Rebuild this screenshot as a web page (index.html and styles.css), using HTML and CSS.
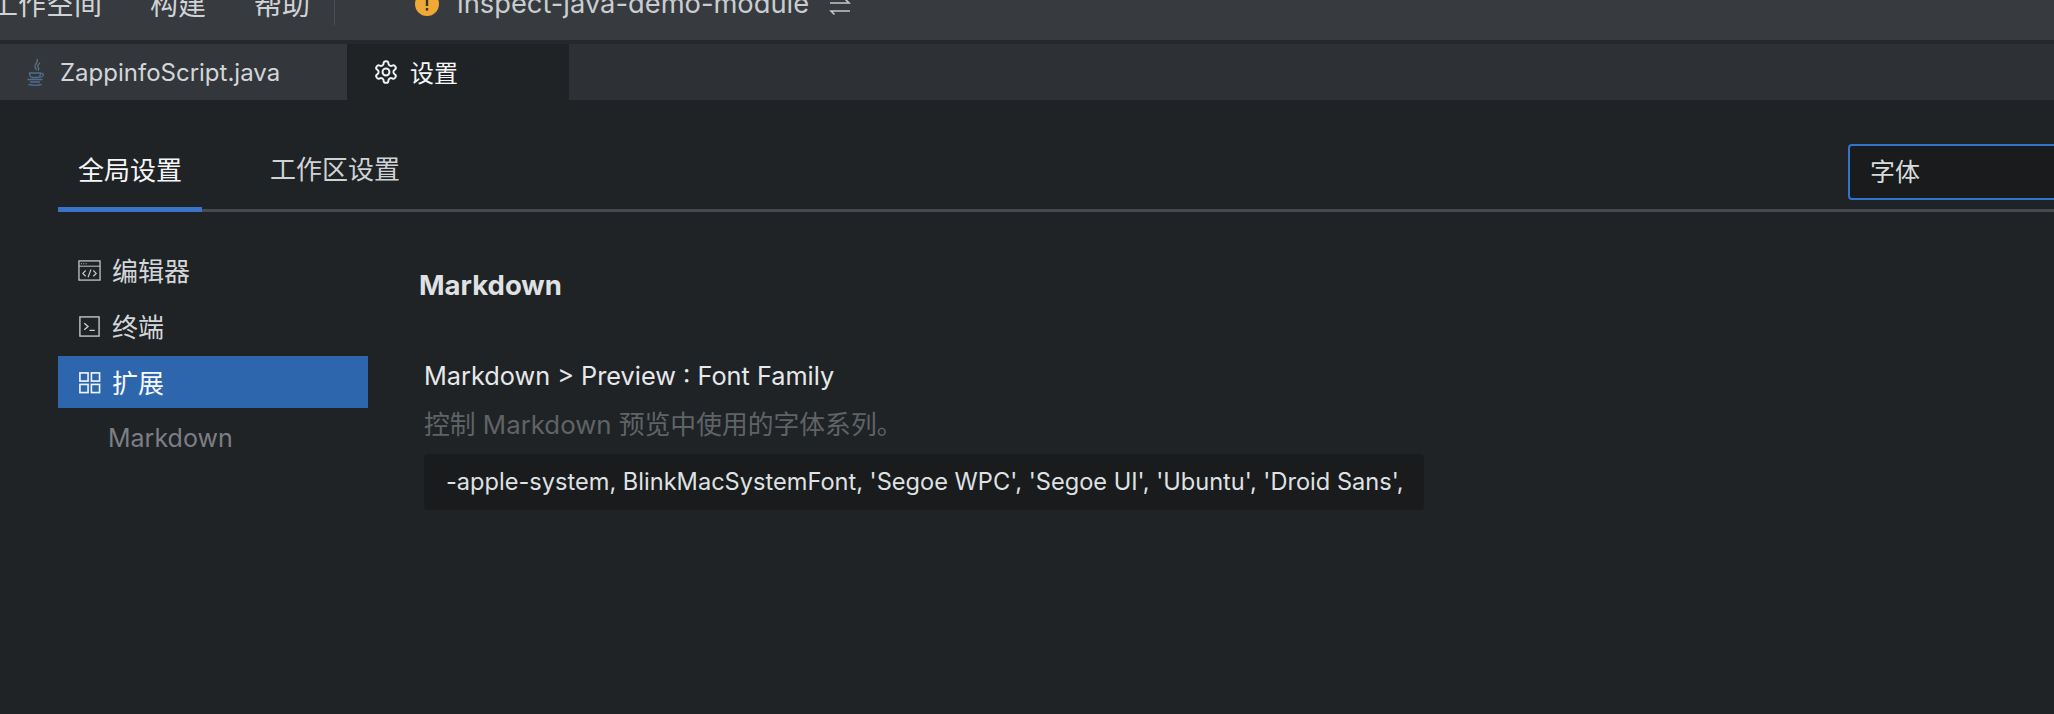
FILE: index.html
```html
<!DOCTYPE html>
<html>
<head>
    <meta charset="utf-8">
    <title>设置</title>
    <link rel="stylesheet" href="styles.css">
</head>
<body>
    <div class="menubar">
        <div class="menu-items">
            <span class="menu-item menu-first">工作空间</span>
            <span class="menu-item">构建</span>
            <span class="menu-item">帮助</span>
        </div>
        <div class="menu-sep"></div>
        <div class="project">
            <svg class="warn-icon" viewBox="0 0 24 24"><circle cx="12" cy="12" r="12" fill="#efa935"/><rect x="10.8" y="4" width="2.4" height="10" fill="#3a3228"/><rect x="10.8" y="16" width="2.4" height="2.6" fill="#3a3228"/></svg>
            <span class="project-name">inspect-java-demo-module</span>
            <svg class="switch-icon" viewBox="0 0 22 16" fill="none" stroke="#c3c8cc" stroke-width="1.6"><path d="M1 3h19l-3.500-3.500"/><path d="M21 11H2l3.500 3.500"/></svg>
        </div>
    </div>

    <div class="tabbar">
        <div class="tab">
            <svg class="java-icon" viewBox="0 0 20 28" fill="none" stroke="#4f6d8c" stroke-width="1.300">
                <path d="M11 1c2 3-3 5-2 8 .4 1.300 1.500 2 1.500 3" stroke="#5d7186"/>
                <path d="M14 5c-3 2-2.500 3.500-1.500 5 .5 1 0 2-.5 2.500" stroke="#5d7186"/>
                <path d="M3.500 15h11c0 2.500-1 4-2.500 4.500H6c-1.500-.5-2.500-2-2.500-4.500z"/>
                <path d="M15 15.500c2.500-.5 3.500 1.500 1 3l-2.500 .8"/>
                <path d="M1.500 21.500h15M4 24h10M2.500 26.500c4 1 9 1 13 0"/>
            </svg>
            <span>ZappinfoScript.java</span>
        </div>
        <div class="tab tab-active">
            <svg class="gear-icon" viewBox="0 0 24 24" fill="none" stroke="#f0f2f3" stroke-width="1.800" stroke-linejoin="round">
                <path d="M12.220 2h-.44a2 2 0 0 0-2 2v.18a2 2 0 0 1-1 1.730l-.43.25a2 2 0 0 1-2 0l-.15-.08a2 2 0 0 0-2.730.73l-.22.38a2 2 0 0 0 .73 2.730l.15.1a2 2 0 0 1 1 1.720v.51a2 2 0 0 1-1 1.740l-.15.09a2 2 0 0 0-.73 2.730l.22.38a2 2 0 0 0 2.730.73l.15-.08a2 2 0 0 1 2 0l.43.25a2 2 0 0 1 1 1.730V20a2 2 0 0 0 2 2h.44a2 2 0 0 0 2-2v-.18a2 2 0 0 1 1-1.730l.43-.25a2 2 0 0 1 2 0l.15.08a2 2 0 0 0 2.730-.73l.22-.39a2 2 0 0 0-.73-2.730l-.15-.08a2 2 0 0 1-1-1.740v-.5a2 2 0 0 1 1-1.740l.15-.09a2 2 0 0 0 .73-2.730l-.22-.38a2 2 0 0 0-2.730-.73l-.15.08a2 2 0 0 1-2 0l-.43-.25a2 2 0 0 1-1-1.730V4a2 2 0 0 0-2-2z"/>
                <circle cx="12" cy="12" r="3.200"/>
            </svg>
            <span>设置</span>
        </div>
    </div>

    <div class="settings-head">
        <div class="scope scope-active">全局设置</div>
        <div class="scope">工作区设置</div>
        <div class="search">字体</div>
    </div>

    <div class="settings-body">
        <div class="sidebar">
            <div class="side-item">
                <svg class="side-icon" viewBox="0 0 24 24" fill="none" stroke="#c9cccf" stroke-width="1.300">
                    <rect x="1" y="2" width="22" height="20"/>
                    <path d="M1 7.500h22" stroke-width="1"/>
                    <path d="M3 5h1M5.500 5h1M8 5h1" stroke-width="1.200"/>
                    <path d="M8 12l-3 3 3 3M16 12l3 3-3 3M13.500 11l-3 8" stroke-width="1.200"/>
                </svg>
                <span>编辑器</span>
            </div>
            <div class="side-item">
                <svg class="side-icon" viewBox="0 0 24 24" fill="none" stroke="#c9cccf" stroke-width="1.400">
                    <rect x="2" y="2" width="20" height="20"/>
                    <path d="M6.500 8.500l4 3.500-4 3.500M12 16h5.500"/>
                </svg>
                <span>终端</span>
            </div>
            <div class="side-item side-active">
                <svg class="side-icon" viewBox="0 0 24 24" fill="none" stroke="#f2f5f8" stroke-width="1.700">
                    <rect x="2" y="2" width="8.500" height="8.500"/>
                    <rect x="14" y="2" width="8.500" height="8.500"/>
                    <rect x="2" y="14" width="8.500" height="8.500"/>
                    <rect x="14" y="14" width="8.500" height="8.500"/>
                </svg>
                <span>扩展</span>
            </div>
            <div class="side-sub">Markdown</div>
        </div>

        <div class="content">
            <h2 class="section-title">Markdown</h2>
            <div class="setting">
                <div class="setting-title">Markdown &gt; Preview : Font Family</div>
                <div class="setting-desc">控制 Markdown 预览中使用的字体系列。</div>
                <div class="setting-input"><span class="input-text">-apple-system, BlinkMacSystemFont, 'Segoe WPC', 'Segoe UI', 'Ubuntu', 'Droid Sans', sans-serif</span></div>
            </div>
        </div>
    </div>
</body>
</html>
```

FILE: styles.css
```css
html, body {
    margin: 0;
    height: 100%;
    overflow: hidden;
}

body {
    background: #202326;
    color: #e4e6e8;
    font-family: 'Inter', 'Noto Sans CJK SC', sans-serif;
    font-size: 26px;
}

/* top menu, cut off by the top of the window */
.menubar {
    height: 40px;
    background: #373b40;
    border-bottom: 4px solid #26292c;
    display: flex;
    align-items: flex-start;
    overflow: hidden;
}

.menu-items {
    display: flex;
    gap: 48px;
    margin-top: -14px;
    font-size: 28px;
    line-height: 38px;
    color: #d0d3d6;
}

.menu-first {
    margin-left: -10px;
}

.menu-sep {
    width: 1px;
    height: 25px;
    margin-left: 24px;
    background: #4a4e53;
}

.project {
    display: flex;
    align-items: center;
    margin-left: 80px;
    margin-top: -15px;
    color: #c9cdd0;
    font-size: 27.300px;
    line-height: 38px;
}

.warn-icon {
    width: 24px;
    height: 24px;
}

.project-name {
    margin-left: 18px;
}

.switch-icon {
    width: 22px;
    height: 16px;
    margin-left: 20px;
    margin-top: 8px;
}

/* editor tabs */
.tabbar {
    height: 56px;
    background: #2d3135;
    display: flex;
}

.tab {
    width: 347px;
    background: #33373c;
    display: flex;
    align-items: center;
    color: #d3d6d9;
    font-size: 24px;
    box-sizing: border-box;
    padding-left: 26px;
}

.tab span {
    margin-left: 14px;
}

.tab-active {
    width: 222px;
    background: #202326;
    color: #f5f6f7;
}

.tab-active span {
    margin-left: 11px;
    margin-top: -2px;
}

.java-icon {
    width: 20px;
    height: 28px;
}

.gear-icon {
    width: 26px;
    height: 26px;
}

/* global / workspace row */
.settings-head {
    display: flex;
    align-items: flex-end;
    height: 109px;
    margin-left: 58px;
    border-bottom: 3px solid #46494d;
}

.scope {
    height: 105px;
    box-sizing: border-box;
    padding-top: 43px;
    line-height: 46px;
    margin-right: 68px;
    color: #cfd2d5;
}

.scope-active {
    width: 144px;
    padding-top: 41px;
    text-align: center;
    color: #f5f6f7;
    border-bottom: 5px solid #3a74c9;
    margin-bottom: -3px;
}

.search {
    width: 400px;
    height: 56px;
    box-sizing: border-box;
    margin-left: auto;
    margin-right: -194px;
    margin-bottom: 9px;
    padding-left: 20px;
    line-height: 52px;
    font-size: 25px;
    color: #d8dadc;
    background: #191b1d;
    border: 2px solid #2f74cf;
    border-radius: 4px;
}

/* sidebar + content */
.settings-body {
    display: flex;
    margin-left: 58px;
    margin-top: 32px;
}

.sidebar {
    width: 310px;
    display: flex;
    flex-direction: column;
    gap: 4px;
    color: #d3d6d9;
}

.side-item {
    height: 52px;
    display: flex;
    align-items: center;
    padding-left: 20px;
}

.side-item span {
    margin-left: 11px;
    margin-top: -2px;
}

.side-active {
    background: #2d66ad;
    color: #f8fafc;
}

.side-icon {
    width: 23px;
    height: 23px;
}

.side-sub {
    height: 52px;
    line-height: 52px;
    padding-left: 50px;
    font-size: 25px;
    color: #7b7f83;
}

.content {
    margin-left: 51px;
    flex: 1;
}

.section-title {
    margin: 15px 0 0;
    font-size: 27.500px;
    font-weight: 700;
    line-height: 52px;
    color: #dfe1e3;
}

.setting {
    margin-left: 5px;
    margin-top: 45px;
}

.setting-title {
    font-size: 25.300px;
    line-height: 40px;
    color: #e6e8ea;
}

.setting-desc {
    line-height: 40px;
    font-size: 25.800px;
    margin-top: 9px;
    color: #5f6367;
}

.setting-input {
    width: 1000px;
    height: 56px;
    box-sizing: border-box;
    margin-top: 9px;
    padding: 0 22px 0 22px;
    background: #191b1d;
    border-radius: 4px;
    line-height: 56px;
    font-size: 23.600px;
    color: #dfe1e3;
}

.input-text {
    display: block;
    overflow: hidden;
    white-space: nowrap;
}
```
